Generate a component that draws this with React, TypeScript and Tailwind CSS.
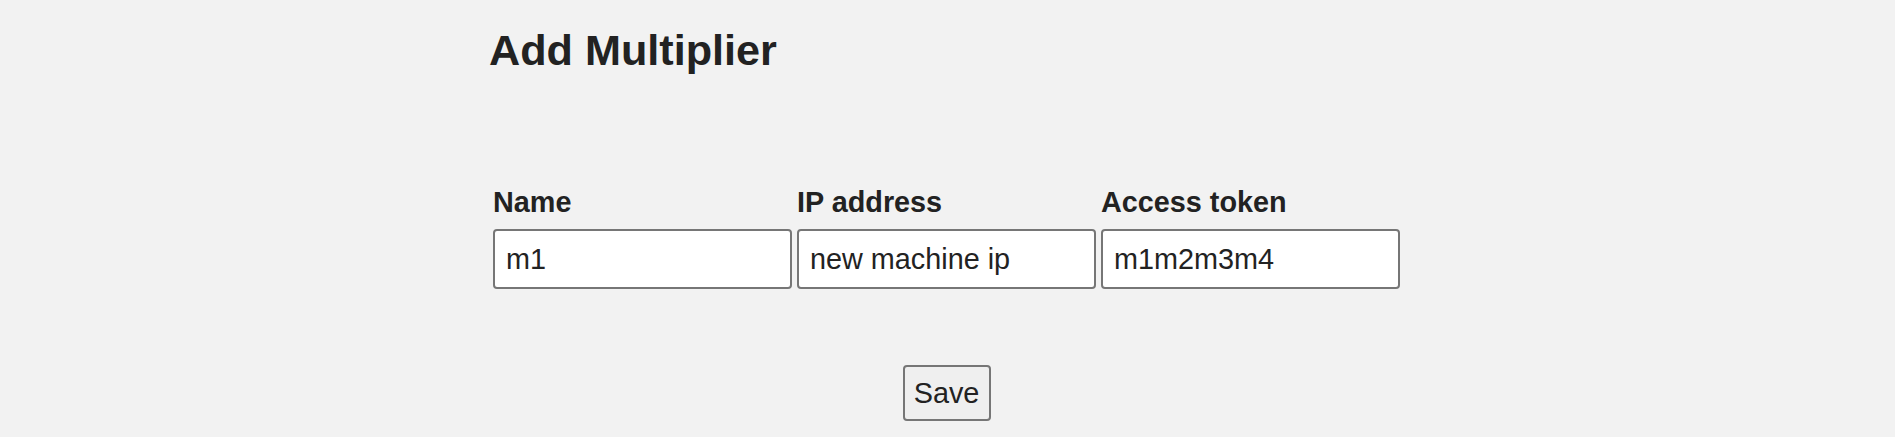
const fields = [
  { label: "Name", value: "m1" },
  { label: "IP address", value: "new machine ip" },
  { label: "Access token", value: "m1m2m3m4" },
];

export default function App() {
  return (
    <div className="min-h-[437px] bg-[#f2f2f2] font-['Liberation_Sans',Arial,sans-serif] text-[#222222]">
      <div className="mx-auto w-[915px] pt-[25px]">
        <h2 className="-ml-[1px] text-[43.2px] font-bold leading-[50px]">Add Multiplier</h2>

        <form
          className="ml-[3px] mt-[111px] flex w-fit flex-col items-center"
          onSubmit={(e) => e.preventDefault()}
        >
          <div className="flex gap-[5px]">
            {fields.map((f) => (
              <label key={f.label} className="flex w-[299px] flex-col">
                <span className="text-[28.8px] font-bold leading-[33px]">{f.label}</span>
                <input
                  defaultValue={f.value}
                  className="mt-[10px] h-[60px] w-full rounded-[4px] border-2 border-[#767676] bg-white px-[11px] text-[28.8px] text-[#222222] outline-none"
                />
              </label>
            ))}
          </div>

          <button
            type="submit"
            className="mt-[76px] h-[56px] w-[88px] rounded-[4px] border-2 border-[#767676] bg-[#efefef] text-[28.8px] leading-none text-[#222222]"
          >
            Save
          </button>
        </form>
      </div>
    </div>
  );
}
